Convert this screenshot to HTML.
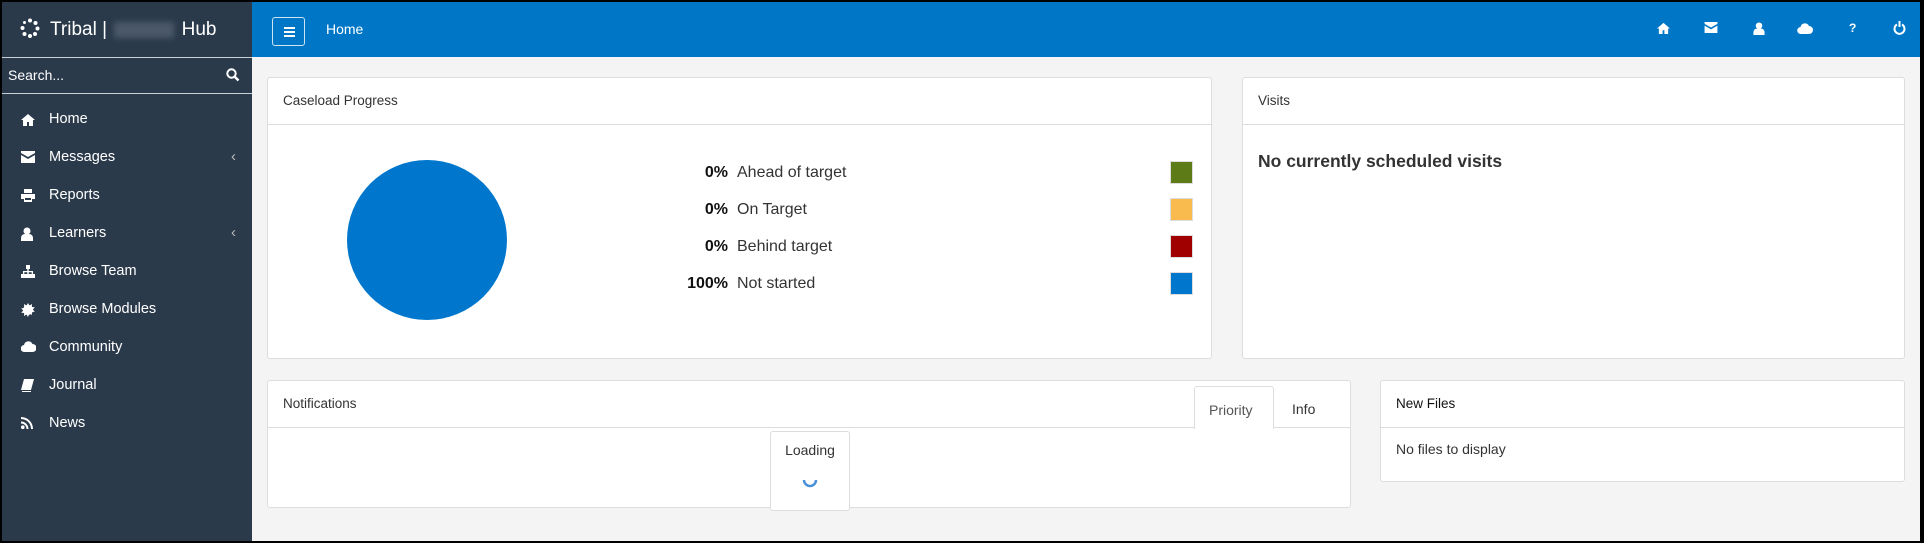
<!DOCTYPE html>
<html><head><meta charset="utf-8"><style>
*{box-sizing:border-box;margin:0;padding:0}
body{width:1924px;height:543px;overflow:hidden;font-family:"Liberation Sans",sans-serif;background:#000;position:relative}
#frame{position:absolute;left:2px;top:2px;width:1918px;height:539px;background:#f4f4f4;overflow:hidden}
#side{position:absolute;left:0;top:0;width:250px;height:539px;background:#2b3a4b;color:#fff}
.logo{position:absolute;left:18px;top:16px;font-size:19px;white-space:nowrap}
.blur{display:inline-block;width:60px;height:16px;background:#4a5868;filter:blur(3px);vertical-align:middle;margin:0 2px}
.search{position:absolute;left:0;top:55px;width:250px;height:37px;border-top:1px solid #c9d0d6;border-bottom:1px solid #c9d0d6;font-size:14px;padding:9px 6px}
.nav{position:absolute;left:0;top:102px;width:250px}
.nav div{height:38px;line-height:30px;font-size:14.5px;padding-left:47px;position:relative}
.nav svg{position:absolute;left:19px;top:9px}
.nav .ch{position:absolute;right:16px;top:0;color:#bbb;font-size:15px}
#top{position:absolute;left:250px;top:0;right:0;height:55px;background:#0077c6;color:#fff}
.ham{position:absolute;left:20px;top:15px;width:33px;height:29px;border:1px solid #cfe3f3;border-radius:3px}
.ham i{position:absolute;left:11px;width:11px;height:2px;background:#fff}
.ttl{position:absolute;left:74px;top:19px;font-size:14px}
.ti{position:absolute;top:20px}
.panel{position:absolute;background:#fff;border:1px solid #ddd;border-radius:3px}
.ph{height:47px;border-bottom:1px solid #ddd;font-size:13.5px;color:#333;padding:15px 15px}
.leg{position:absolute;font-size:16px;color:#333;white-space:nowrap}
.leg b{display:inline-block;width:60px;text-align:right;margin-right:9px;color:#111}
.sq{position:absolute;left:902px;width:23px;height:23px;border:1px solid #ddd}
</style></head><body><div id="frame">
<div id="side">
 <div class="logo"><svg width="20" height="20" viewBox="0 0 20 20" style="vertical-align:-3px;margin-right:10px" fill="#fff"><circle cx="10" cy="2.5" r="2"/><circle cx="15.5" cy="5" r="2"/><circle cx="17.5" cy="10.5" r="2"/><circle cx="15" cy="16" r="2"/><circle cx="10" cy="18" r="2"/><circle cx="4.5" cy="16" r="2"/><circle cx="2.5" cy="10" r="2"/><circle cx="4.5" cy="4.5" r="1.5"/></svg>Tribal | <span class="blur"></span> Hub</div>
 <div class="search">Search...<svg style="position:absolute;right:12px;top:10px" width="14" height="14" viewBox="0 0 14 14"><circle cx="5.5" cy="5.5" r="4.2" fill="none" stroke="#fff" stroke-width="2"/><path d="M8.5 8.5l4 4" stroke="#fff" stroke-width="2.4"/></svg></div>
 <div class="nav">
  <div><svg width="14" height="13" viewBox="0 0 14 13" fill="#fff"><path d="M7 1L0 7h2v6h4V9h2v4h4V7h2z"/></svg>Home</div>
  <div><svg width="14" height="12" viewBox="0 0 14 12" fill="#fff"><path d="M0 0h14v2L7 6 0 2zM0 4l7 4 7-4v8H0z"/></svg>Messages<span class="ch">‹</span></div>
  <div><svg width="14" height="13" viewBox="0 0 14 13" fill="#fff"><path d="M3 0h8v4H3zM0 5h14v5h-3v3H3v-3H0zM4 9v2h6V9z"/></svg>Reports</div>
  <div><svg width="12" height="14" viewBox="0 0 12 14" fill="#fff"><circle cx="6" cy="4" r="3.5"/><path d="M0 14v-3a4 4 0 0 1 4-4h4a4 4 0 0 1 4 4v3z"/></svg>Learners<span class="ch">‹</span></div>
  <div><svg width="14" height="13" viewBox="0 0 14 13" fill="#fff"><path d="M5 0h4v4H5zM6.3 4h1.4v2H12v3h-1.3V7.3H7.7V9H6.3V7.3H3.3V9H2V6h4.3zM0 9h5v4H0zM4.5 9h5v4h-5zM9 9h5v4H9z"/></svg>Browse Team</div>
  <div><svg width="14" height="14" viewBox="0 0 14 14" fill="#fff"><circle cx="7" cy="7" r="5"/><path d="M7 0l1.5 2.5L11 1l-.2 3 3 .3-2 2.2 2 2.3-3 .2.2 3-2.5-1.5L7 14l-1.5-2.5L3 13l.2-3-3-.2 2-2.3-2-2.2 3-.3L3 1l2.5 1.5z"/></svg>Browse Modules</div>
  <div><svg width="15" height="11" viewBox="0 0 15 11" fill="#fff"><path d="M3.5 11a3.5 3.5 0 0 1-.5-7A4.5 4.5 0 0 1 11.5 3 4 4 0 0 1 11.5 11z"/></svg>Community</div>
  <div><svg width="13" height="13" viewBox="0 0 13 13" fill="#fff"><path d="M3 0h10l-3 11H0zM1 12h9v1H1z"/></svg>Journal</div>
  <div><svg width="12" height="12" viewBox="0 0 12 12" fill="#fff"><circle cx="1.8" cy="10.2" r="1.8"/><path d="M0 4.5a7.5 7.5 0 0 1 7.5 7.5H5.5A5.5 5.5 0 0 0 0 6.5zM0 0a12 12 0 0 1 12 12H10A10 10 0 0 0 0 2z"/></svg>News</div>
 </div>
</div>
<div id="top">
 <div class="ham"><i style="top:9px"></i><i style="top:13px"></i><i style="top:17px"></i></div>
 <div class="ttl">Home</div>
 <svg class="ti" style="left:1405px" width="13" height="12" viewBox="0 0 14 13" fill="#fff"><path d="M7 1L0 7h2v6h4V9h2v4h4V7h2z"/></svg>
 <svg class="ti" style="left:1452px" width="14" height="11" viewBox="0 0 14 12" fill="#fff"><path d="M0 0h14v2L7 6 0 2zM0 4l7 4 7-4v8H0z"/></svg>
 <svg class="ti" style="left:1501px" width="12" height="13" viewBox="0 0 12 14" fill="#fff"><circle cx="6" cy="4" r="3.5"/><path d="M0 14v-3a4 4 0 0 1 4-4h4a4 4 0 0 1 4 4v3z"/></svg>
 <svg class="ti" style="left:1545px;top:21px" width="16" height="11" viewBox="0 0 15 11" fill="#fff"><path d="M3.5 11a3.5 3.5 0 0 1-.5-7A4.5 4.5 0 0 1 11.5 3 4 4 0 0 1 11.5 11z"/></svg>
 <span class="ti" style="left:1597px;top:19px;font-size:12px;font-weight:bold">?</span>
 <svg class="ti" style="left:1641px;top:19px" width="13" height="14" viewBox="0 0 13 14"><path d="M4 3.5a5 5 0 1 0 5 0" fill="none" stroke="#fff" stroke-width="2"/><path d="M6.5 0v6" stroke="#fff" stroke-width="2"/></svg>
</div>
<div class="panel" style="left:265px;top:75px;width:945px;height:282px">
 <div class="ph">Caseload Progress</div>
 <svg style="position:absolute;left:78px;top:81px" width="162" height="162"><circle cx="81" cy="81" r="80" fill="#0077cc"/></svg>
 <div class="leg" style="left:400px;top:86px"><b>0%</b>Ahead of target</div>
 <div class="leg" style="left:400px;top:123px"><b>0%</b>On Target</div>
 <div class="leg" style="left:400px;top:160px"><b>0%</b>Behind target</div>
 <div class="leg" style="left:400px;top:197px"><b>100%</b>Not started</div>
 <div class="sq" style="top:83px;background:#5d7b17"></div>
 <div class="sq" style="top:120px;background:#f9bb4e"></div>
 <div class="sq" style="top:157px;background:#a00000"></div>
 <div class="sq" style="top:194px;background:#0077cc"></div>
</div>
<div class="panel" style="left:1240px;top:75px;width:663px;height:282px">
 <div class="ph">Visits</div>
 <div style="position:absolute;left:15px;top:73px;font-size:17.5px;font-weight:bold;color:#333">No currently scheduled visits</div>
</div>
<div class="panel" style="left:265px;top:378px;width:1084px;height:128px">
 <div class="ph">Notifications</div>
 <div style="position:absolute;left:926px;top:5px;width:80px;height:43px;background:#fff;border:1px solid #ddd;border-bottom:none;border-radius:3px 3px 0 0;font-size:14px;color:#555;padding:15px 0 0 14px">Priority</div>
 <div style="position:absolute;left:1024px;top:20px;font-size:14px;color:#333">Info</div>
 <div style="position:absolute;left:502px;top:50px;width:80px;height:80px;background:#fff;border:1px solid #ddd;border-radius:3px;font-size:14px;color:#333;text-align:center;padding-top:10px">Loading
 <svg style="display:block;margin:20px auto 0" width="16" height="10" viewBox="0 0 16 10"><path d="M2 2a6 6 0 0 0 12 0" fill="none" stroke="#4a90d9" stroke-width="2.5"/></svg></div>
</div>
<div class="panel" style="left:1378px;top:378px;width:525px;height:102px">
 <div class="ph" style="color:#111">New Files</div>
 <div style="position:absolute;left:15px;top:60px;font-size:14px;color:#333">No files to display</div>
</div>
</div></body></html>
